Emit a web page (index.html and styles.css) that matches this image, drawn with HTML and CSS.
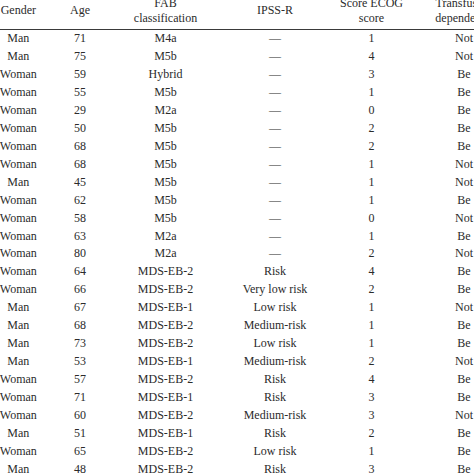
FILE: index.html
```html
<!DOCTYPE html>
<html>
<head>
<meta charset="utf-8">
<link rel="stylesheet" href="styles.css">
</head>
<body>
<div class="frame">
<table class="data">
<colgroup>
<col class="c1"><col class="c2"><col class="c3"><col class="c4"><col class="c5"><col class="c6">
</colgroup>
<thead>
<tr><th>Gender</th><th>Age</th><th>FAB<br>classification</th><th>IPSS-R</th><th>Score ECOG<br>score</th><th>Transfusion<br>dependency</th></tr>
</thead>
<tbody>
<tr><td>Man</td><td>71</td><td>M4a</td><td>—</td><td>1</td><td>Not</td></tr>
<tr><td>Man</td><td>75</td><td>M5b</td><td>—</td><td>4</td><td>Not</td></tr>
<tr><td>Woman</td><td>59</td><td>Hybrid</td><td>—</td><td>3</td><td>Be</td></tr>
<tr><td>Woman</td><td>55</td><td>M5b</td><td>—</td><td>1</td><td>Be</td></tr>
<tr><td>Woman</td><td>29</td><td>M2a</td><td>—</td><td>0</td><td>Be</td></tr>
<tr><td>Woman</td><td>50</td><td>M5b</td><td>—</td><td>2</td><td>Be</td></tr>
<tr><td>Woman</td><td>68</td><td>M5b</td><td>—</td><td>2</td><td>Be</td></tr>
<tr><td>Woman</td><td>68</td><td>M5b</td><td>—</td><td>1</td><td>Not</td></tr>
<tr><td>Man</td><td>45</td><td>M5b</td><td>—</td><td>1</td><td>Not</td></tr>
<tr><td>Woman</td><td>62</td><td>M5b</td><td>—</td><td>1</td><td>Be</td></tr>
<tr><td>Woman</td><td>58</td><td>M5b</td><td>—</td><td>0</td><td>Not</td></tr>
<tr><td>Woman</td><td>63</td><td>M2a</td><td>—</td><td>1</td><td>Be</td></tr>
<tr><td>Woman</td><td>80</td><td>M2a</td><td>—</td><td>2</td><td>Not</td></tr>
<tr><td>Woman</td><td>64</td><td>MDS-EB-2</td><td>Risk</td><td>4</td><td>Be</td></tr>
<tr><td>Woman</td><td>66</td><td>MDS-EB-2</td><td>Very low risk</td><td>2</td><td>Be</td></tr>
<tr><td>Man</td><td>67</td><td>MDS-EB-1</td><td>Low risk</td><td>1</td><td>Not</td></tr>
<tr><td>Man</td><td>68</td><td>MDS-EB-2</td><td>Medium-risk</td><td>1</td><td>Be</td></tr>
<tr><td>Man</td><td>73</td><td>MDS-EB-2</td><td>Low risk</td><td>1</td><td>Be</td></tr>
<tr><td>Man</td><td>53</td><td>MDS-EB-1</td><td>Medium-risk</td><td>2</td><td>Not</td></tr>
<tr><td>Woman</td><td>57</td><td>MDS-EB-2</td><td>Risk</td><td>4</td><td>Be</td></tr>
<tr><td>Woman</td><td>71</td><td>MDS-EB-1</td><td>Risk</td><td>3</td><td>Be</td></tr>
<tr><td>Woman</td><td>60</td><td>MDS-EB-2</td><td>Medium-risk</td><td>3</td><td>Not</td></tr>
<tr><td>Man</td><td>51</td><td>MDS-EB-1</td><td>Risk</td><td>2</td><td>Be</td></tr>
<tr><td>Woman</td><td>65</td><td>MDS-EB-2</td><td>Low risk</td><td>1</td><td>Be</td></tr>
<tr><td>Man</td><td>48</td><td>MDS-EB-2</td><td>Risk</td><td>3</td><td>Be</td></tr>
</tbody>
</table>
</div>
</body>
</html>
```
FILE: styles.css
```css
html, body {
  margin: 0;
  padding: 0;
  background: #ffffff;
}
.frame {
  width: 474px;
  height: 474px;
  overflow: hidden;
}
.data {
  table-layout: fixed;
  width: 527.4px;
  border-spacing: 0;
  margin-top: -4.45px;
  margin-left: -12.4px;
  font-family: "Liberation Serif", "Times New Roman", serif;
  font-size: 12px;
  color: #2b2b2b;
}
.c1 { width: 61.4px; }
.c2 { width: 62px; }
.c3 { width: 109px; }
.c4 { width: 110px; }
.c5 { width: 83px; }
.c6 { width: 102px; }
.data th {
  font-weight: normal;
  line-height: 15.4px;
  padding: 0 0 3px;
  text-align: center;
  vertical-align: middle;
  white-space: nowrap;
  border-bottom: 1px solid #3a3a3a;
}
.data td {
  padding: 0;
  line-height: 17.92px;
  text-align: center;
  white-space: nowrap;
}
```
